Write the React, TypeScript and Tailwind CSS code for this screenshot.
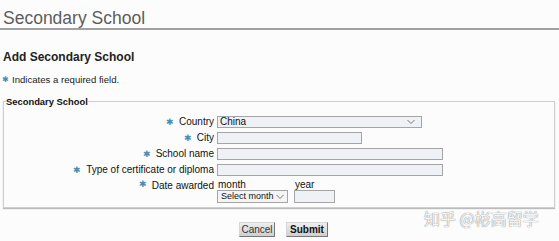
import React from 'react';

const font = { fontFamily: '"Liberation Sans", Arial, sans-serif' };

function Req() {
  return <span className="mr-[5px] inline-block text-[9px] leading-none text-[#4a8db0] align-[1px]">✱</span>;
}

function Label({ children }: { children: React.ReactNode }) {
  return (
    <div className="flex items-center justify-end text-[10px] leading-[12px] text-[#111]">
      <Req />
      {children}
    </div>
  );
}

function TextInput({ w }: { w: string }) {
  return <input className={`h-[12px] ${w} border border-[#a5a5a5] bg-[#eef2f6] outline-none`} />;
}

export default function App() {
  return (
    <div className="relative h-[241px] w-[559px] overflow-hidden bg-[#fcfcfc]" style={font}>
      {/* Page title */}
      <h1 className="h-[30px] border-b-2 border-[#a0a0a0] pl-[3px] pt-[8px] text-[17.5px] leading-[20px] text-[#5c5c5c]">
        Secondary School
      </h1>

      <h2 className="mt-[20px] pl-[3px] text-[12px] font-bold leading-[14px] text-[#222]">Add Secondary School</h2>

      <p className="mt-[10px] flex items-center pl-[2px] text-[9.6px] leading-[12px] text-[#222]">
        <span className="mr-[3px] text-[8px] leading-none text-[#4a8db0]">✱</span>
        Indicates a required field.
      </p>

      {/* Form */}
      <fieldset className="ml-[3px] mt-[10px] h-[112px] w-[552px] border border-[#cfcfcf] px-0 pb-[4px] pt-[9px] shadow-[0_1px_1px_#bbb]">
        <legend className="ml-[2px] px-0 text-[9.4px] font-bold leading-[11px] text-[#111]">Secondary School</legend>

        <div className="grid grid-cols-[210px_1fr] gap-x-[3px] gap-y-[4px]">
          <Label>Country</Label>
          <div className="relative h-[12px] w-[205px] border border-[#a5a5a5] bg-[#eef2f6] pl-[2px] text-[10px] leading-[10px] text-[#111]">
            China
            <svg className="absolute right-[6px] top-[2px]" width="8" height="6" viewBox="0 0 8 6" fill="none" stroke="#777" strokeWidth="1">
              <path d="M0.5 1 L4 4.5 L7.5 1" />
            </svg>
          </div>

          <Label>City</Label>
          <TextInput w="w-[145px]" />

          <Label>School name</Label>
          <TextInput w="w-[226px]" />

          <Label>Type of certificate or diploma</Label>
          <TextInput w="w-[226px]" />

          <div className="flex items-start justify-end text-[10px] leading-[12px] text-[#111]">
            <Req />
            Date awarded
          </div>
          <div className="-mt-[1px] flex gap-[6px] text-[10px] text-[#111]">
            <div className="flex flex-col">
              <span className="pl-[1px] leading-[11px]">month</span>
              <div className="relative h-[13px] w-[71px] border border-[#a5a5a5] bg-[#f4f4f4] pl-[3px] text-[9px] leading-[11px]">
                Select month
                <svg className="absolute right-[3px] top-[3px]" width="8" height="6" viewBox="0 0 8 6" fill="none" stroke="#777" strokeWidth="1">
                  <path d="M0.5 1 L4 4.5 L7.5 1" />
                </svg>
              </div>
            </div>
            <div className="flex flex-col">
              <span className="pl-[1px] leading-[11px]">year</span>
              <input className="h-[13px] w-[41px] border border-[#a5a5a5] bg-[#eef2f6] outline-none" />
            </div>
          </div>
        </div>
      </fieldset>

      {/* Buttons */}
      <div className="mt-[14px] flex gap-[11px] pl-[239px]">
        <button className="h-[15px] w-[36px] border border-[#d6d6d6] border-b-[#777] border-r-[#777] bg-gradient-to-b from-[#eeeeee] to-[#cfcfcf] text-[10px] leading-[12px] text-[#333]">
          Cancel
        </button>
        <button className="h-[15px] w-[42px] border border-[#d6d6d6] border-b-[#777] border-r-[#777] bg-gradient-to-b from-[#eeeeee] to-[#cfcfcf] text-[10px] font-bold leading-[12px] text-[#111]">
          Submit
        </button>
      </div>

      {/* Watermark */}
      <div
        className="absolute left-[424px] top-[208px] text-[16px] leading-[20px] text-[#f4f4f4] [text-shadow:0_0_1px_#888,0_0_1px_#aaa]"
        style={{ fontFamily: '"Noto Sans CJK SC", sans-serif' }}
      >
        知乎 @彬高留学
      </div>
    </div>
  );
}
